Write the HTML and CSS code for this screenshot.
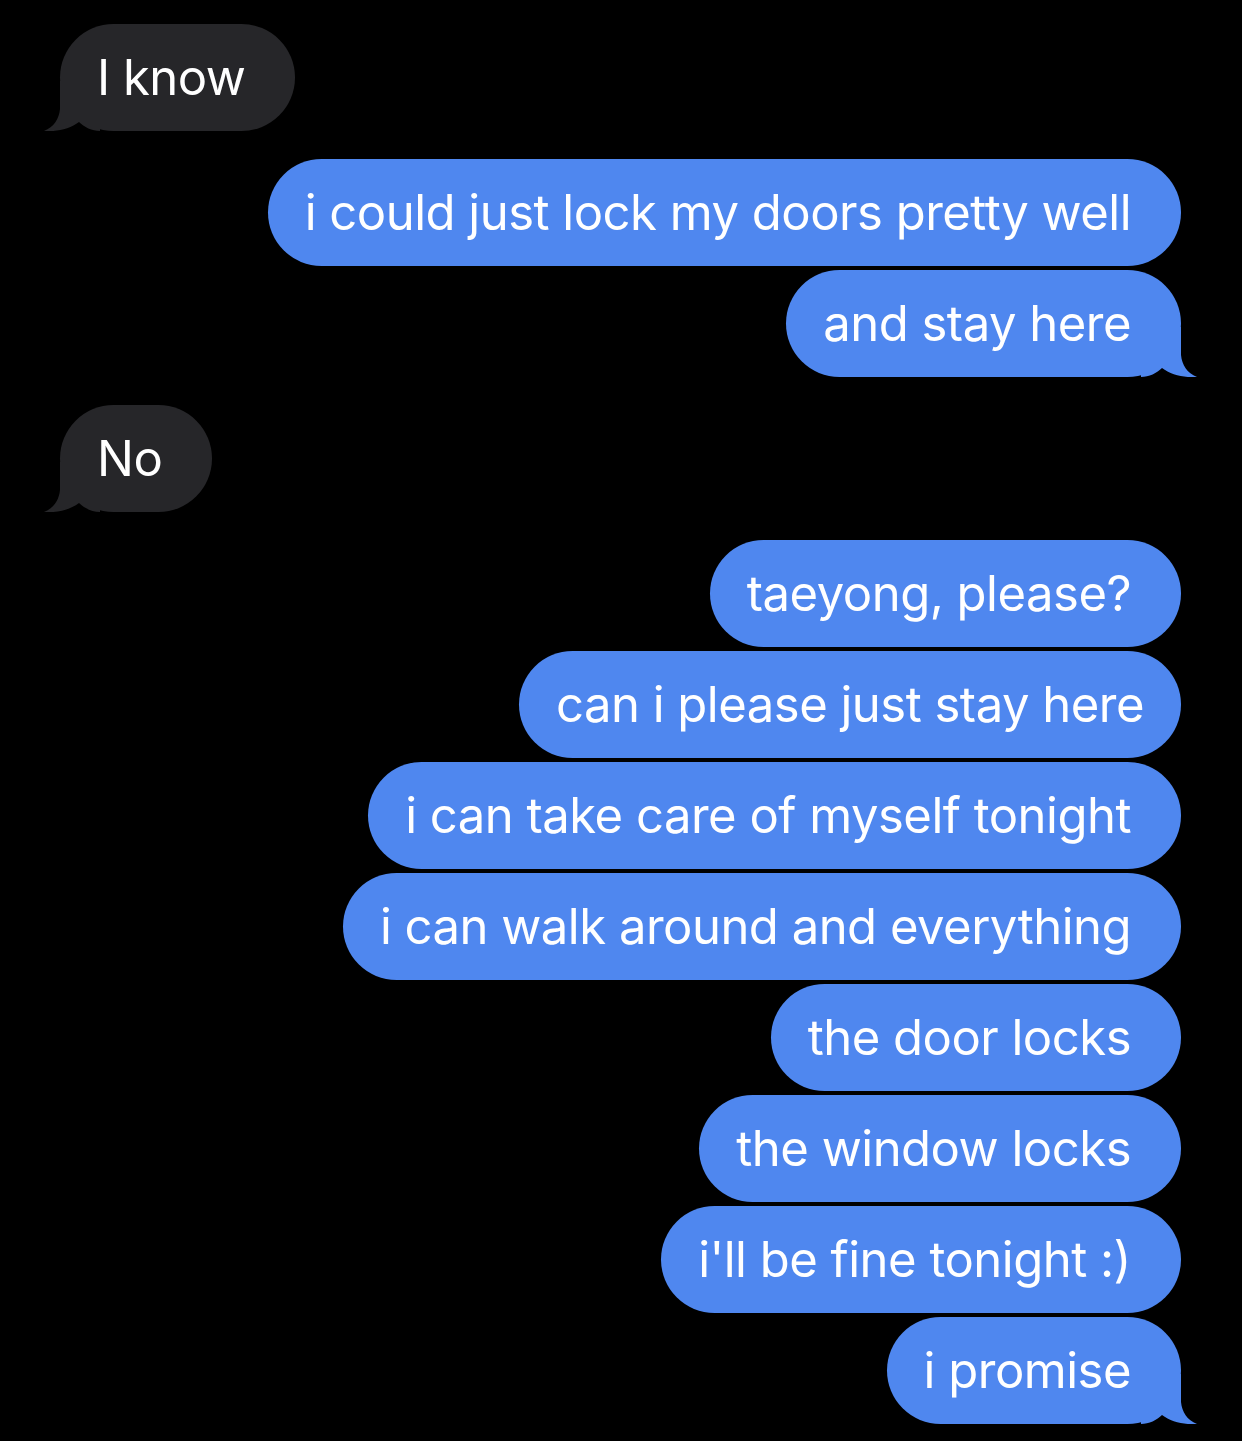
FILE: index.html
```html
<!DOCTYPE html>
<html lang="en">
<head>
    <meta charset="UTF-8">
    <meta name="viewport" content="width=device-width, initial-scale=1.0">
    <title>Messages</title>
    <link rel="stylesheet" href="styles.css">
</head>
<body>
    <div class="thread">
        <div class="group">
            <div class="row in">
                <div class="bubble gray tail">I know
                    <svg class="tail-svg" viewBox="0 0 56 50" width="56" height="50"><path d="M0 50 C8 50 16 46 21 41 C30 48 44 51 56 50 C46 46 41 38 40 28 L40 0 L0 0 Z"/></svg>
                </div>
            </div>
        </div>

        <div class="group">
            <div class="row out"><div class="bubble blue">i could just lock my doors pretty well</div></div>
            <div class="row out">
                <div class="bubble blue tail">and stay here
                    <svg class="tail-svg" viewBox="0 0 56 50" width="56" height="50"><path d="M0 50 C8 50 16 46 21 41 C30 48 44 51 56 50 C46 46 41 38 40 28 L40 0 L0 0 Z"/></svg>
                </div>
            </div>
        </div>

        <div class="group">
            <div class="row in">
                <div class="bubble gray tail">No
                    <svg class="tail-svg" viewBox="0 0 56 50" width="56" height="50"><path d="M0 50 C8 50 16 46 21 41 C30 48 44 51 56 50 C46 46 41 38 40 28 L40 0 L0 0 Z"/></svg>
                </div>
            </div>
        </div>

        <div class="group">
            <div class="row out"><div class="bubble blue">taeyong, please?</div></div>
            <div class="row out"><div class="bubble blue tight">can i please just stay here</div></div>
            <div class="row out"><div class="bubble blue">i can take care of myself tonight</div></div>
            <div class="row out"><div class="bubble blue">i can walk around and everything</div></div>
            <div class="row out"><div class="bubble blue">the door locks</div></div>
            <div class="row out"><div class="bubble blue">the window locks</div></div>
            <div class="row out"><div class="bubble blue">i'll be fine tonight :)</div></div>
            <div class="row out">
                <div class="bubble blue tail">i promise
                    <svg class="tail-svg" viewBox="0 0 56 50" width="56" height="50"><path d="M0 50 C8 50 16 46 21 41 C30 48 44 51 56 50 C46 46 41 38 40 28 L40 0 L0 0 Z"/></svg>
                </div>
            </div>
        </div>
    </div>
</body>
</html>
```

FILE: styles.css
```css
* {
    margin: 0;
    padding: 0;
    box-sizing: border-box;
}

body {
    background: #000;
    color: #fff;
    font-family: 'Inter', 'Noto Sans', sans-serif;
}

.thread {
    display: flex;
    flex-direction: column;
    gap: 28px;
    padding: 24px 61px 0 60px;
}

.group {
    display: flex;
    flex-direction: column;
    gap: 4px;
}

.row {
    display: flex;
}

.row.out {
    justify-content: flex-end;
}

.row.in {
    justify-content: flex-start;
}

.bubble {
    position: relative;
    height: 107px;
    line-height: 107px;
    font-size: 49px;
    letter-spacing: -0.5px;
    padding: 0 50px 0 37px;
    border-radius: 54px;
    white-space: nowrap;
}

/* this one sits closer to the right edge in the original */
.bubble.tight {
    padding-right: 37px;
}

.bubble.blue {
    background: #4f87ef;
}

.bubble.gray {
    background: #262629;
}

.tail-svg {
    position: absolute;
    bottom: 0;
    right: -16px;
    display: block;
}

.blue .tail-svg {
    fill: #4f87ef;
}

.gray .tail-svg {
    fill: #262629;
    right: auto;
    left: -16px;
    transform: scaleX(-1);
}
```
